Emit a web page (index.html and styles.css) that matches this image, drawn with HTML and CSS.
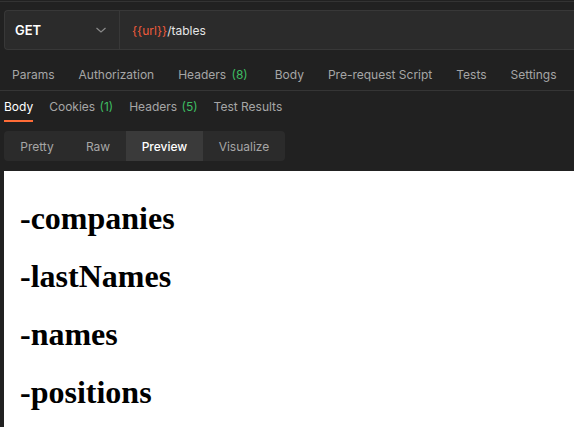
FILE: index.html
```html
<!DOCTYPE html>
<html lang="en">
<head>
  <meta charset="UTF-8">
  <title>GET tables</title>
  <link rel="stylesheet" href="styles.css">
</head>
<body>
  <div class="topline"></div>

  <div class="request">
    <div class="method">
      <span>GET</span>
      <svg width="12" height="8" viewBox="0 0 12 8"><path d="M1.5 2 L6 6 L10.5 2" fill="none" stroke="#8a8a8a" stroke-width="1.2"/></svg>
    </div>
    <div class="url"><span class="var">{{url}}</span>/tables</div>
  </div>

  <div class="tabs">
    <span>Params</span>
    <span>Authorization</span>
    <span>Headers <em>(8)</em></span>
    <span>Body</span>
    <span>Pre-request Script</span>
    <span>Tests</span>
    <span>Settings</span>
  </div>

  <div class="restabs">
    <span class="active">Body</span>
    <span>Cookies <em>(1)</em></span>
    <span>Headers <em>(5)</em></span>
    <span>Test Results</span>
  </div>

  <div class="formats">
    <span class="f-pretty">Pretty</span>
    <span class="f-raw">Raw</span>
    <span class="f-preview selected">Preview</span>
    <span class="f-vis">Visualize</span>
  </div>

  <div class="preview">
    <h1>-companies</h1>
    <h1>-lastNames</h1>
    <h1>-names</h1>
    <h1>-positions</h1>
  </div>
</body>
</html>
```

FILE: styles.css
```css
* {
  box-sizing: border-box;
}

body {
  margin: 0;
  width: 574px;
  height: 427px;
  overflow: hidden;
  background-color: #212121;
  font-family: Inter, "Noto Sans", sans-serif;
  font-size: 12px;
  color: #a6a6a6;
  white-space: nowrap;
}

.topline {
  height: 1px;
  margin-top: 1px;
  background-color: #333333;
}

.request {
  display: flex;
  height: 40px;
  margin: 8px 0 0 4px;
  border: 1px solid #383838;
  border-right: none;
  border-radius: 4px 0 0 4px;
  background-color: #2b2b2b;
}

.method {
  display: flex;
  align-items: center;
  justify-content: space-between;
  width: 115px;
  padding: 0 12px 0 10px;
  border-right: 1px solid #383838;
  color: #ffffff;
  font-size: 13px;
  font-weight: 600;
}

.url {
  display: flex;
  align-items: center;
  padding-left: 12px;
  color: #e6e6e6;
}

.url .var {
  color: #f05b3c;
}

.tabs {
  display: flex;
  gap: 24px;
  height: 41px;
  padding: 9px 0 0 12px;
  align-items: center;
  border-bottom: 1px solid #353535;
}

.tabs span,
.restabs span {
  flex-shrink: 0;
}

em {
  font-style: normal;
  color: #3ebd62;
  padding-left: 1px;
}

.tabs em {
  padding: 0 3px 0 2px;
}

.restabs {
  display: flex;
  gap: 16px;
  height: 31px;
  padding-left: 4px;
  align-items: center;
}

.restabs span {
  position: relative;
}

.restabs .active {
  color: #ffffff;
}

.restabs .active::after {
  content: "";
  position: absolute;
  left: 0;
  right: 0;
  bottom: -8px;
  height: 2px;
  background-color: #ff6c37;
}

.formats {
  display: flex;
  width: 281px;
  height: 30px;
  margin: 9px 0 0 4px;
  border-radius: 4px;
  background-color: #2b2b2b;
  overflow: hidden;
}

.formats span {
  display: flex;
  align-items: center;
  justify-content: center;
  height: 100%;
}

.f-pretty { width: 66px; }
.f-raw { width: 56px; }
.f-preview { width: 77px; }
.f-vis { width: 82px; }

.formats .selected {
  background-color: #3a3a3a;
  color: #ffffff;
  font-weight: 500;
}

.preview {
  margin: 10px 0 0 4px;
  height: 256px;
  padding: 8px 16px;
  background-color: #ffffff;
  font-family: "Liberation Serif", serif;
  color: #000000;
}

.preview h1 {
  margin: 21px 0;
  font-size: 32px;
}
```
